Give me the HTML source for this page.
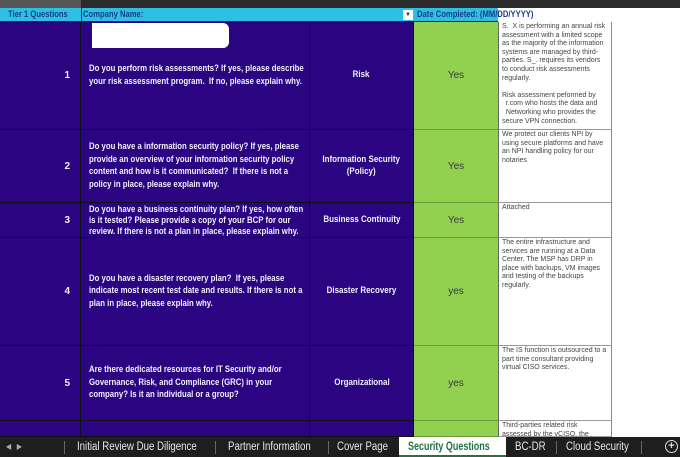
<!DOCTYPE html>
<html><head><style>
*{margin:0;padding:0;box-sizing:border-box}
body{width:680px;height:457px;overflow:hidden;background:#fff;position:relative;font-family:"Liberation Sans",sans-serif}
.a{position:absolute}
.p{background:#2a0481;border-right:1px solid #111;border-bottom:1px solid #111;color:#f0f0ff;font-weight:bold;font-size:9.5px;display:flex;align-items:center}
.g{background:#92d050;border-bottom:1px solid #6a9a3a;color:#3a3a3a;font-size:10px;display:flex;align-items:center;justify-content:center}
.e{background:#fff;border-right:1px solid #888;border-bottom:1px solid #999;border-left:1px solid #666;color:#444;font-size:7px;line-height:8.6px;padding:1px 3px;overflow:hidden}
.q{padding-left:8px;line-height:12.5px}
.q>div{width:264px;transform:scaleX(0.82);transform-origin:left center;flex:none}
.c{justify-content:center;text-align:center;line-height:12.5px}
.c>div{transform:scaleX(0.84);white-space:nowrap}
.n{justify-content:flex-end;padding-right:10px;font-size:10px}
.tab{position:absolute;top:0;height:20px;line-height:20px;font-size:11.5px;color:#e8e8e8;transform:scaleX(0.84);transform-origin:left center;white-space:nowrap}
.h{transform:scaleX(0.85);transform-origin:left center;white-space:nowrap}
</style></head><body>
<div class="a" style="left:0;top:0;width:680px;height:8px;background:#2b2b2b"></div>
<div class="a" style="left:0;top:0;width:81px;height:8px;background:#555"></div>
<div class="a" style="left:0;top:8px;width:498px;height:14px;background:#2ec0e4;border-bottom:1px solid #222"></div>
<div class="a h" style="left:8px;top:9px;font-size:9px;font-weight:bold;color:#1a3c8a">Tier 1 Questions</div>
<div class="a" style="left:81px;top:8px;width:1px;height:14px;background:#333"></div>
<div class="a h" style="left:83px;top:9px;font-size:9px;font-weight:bold;color:#1a3c8a">Company Name:</div>
<div class="a" style="left:403px;top:10px;width:10px;height:10px;background:#fff;font-size:6px;color:#333;text-align:center;line-height:10px">▼</div>
<div class="a h" style="left:417px;top:9px;font-size:9px;font-weight:bold;color:#1a3c8a">Date Completed: (MM/DD/YYYY)</div>
<!-- rows -->
<div class="a p n" style="left:0;top:22px;width:81px;height:108px">1</div>
<div class="a p q" style="left:81px;top:22px;width:229px;height:108px"><div>Do you perform risk assessments? If yes, please describe your risk assessment program.&nbsp; If no, please explain why.</div></div>
<div class="a" style="left:92px;top:23px;width:137px;height:25px;background:#fff;border-radius:0 6px 6px 0"></div>
<div class="a p c" style="left:310px;top:22px;width:104px;height:108px"><div>Risk</div></div>
<div class="a g" style="left:414px;top:22px;width:84px;height:108px">Yes</div>
<div class="a e" style="left:498px;top:22px;width:114px;height:108px">S.&nbsp; X is performing an annual risk assessment with a limited scope as the majority of the information systems are managed by third-parties. S_. requires its vendors to conduct risk assessments regularly.<br><br>Risk assessment peformed by &nbsp; &nbsp; &nbsp; &nbsp; r.com who hosts the data and &nbsp; &nbsp; &nbsp; Networking who provides the secure VPN connection.</div>

<div class="a p n" style="left:0;top:130px;width:81px;height:73px">2</div>
<div class="a p q" style="left:81px;top:130px;width:229px;height:73px"><div>Do you have a information security policy? If yes, please provide an overview of your information security policy content and how is it communicated?&nbsp; If there is not a policy in place, please explain why.</div></div>
<div class="a p c" style="left:310px;top:130px;width:104px;height:73px"><div>Information Security<br>(Policy)</div></div>
<div class="a g" style="left:414px;top:130px;width:84px;height:73px">Yes</div>
<div class="a e" style="left:498px;top:130px;width:114px;height:73px">We protect our clients NPI by using secure platforms and have an NPI handling policy for our notaries</div>

<div class="a p n" style="left:0;top:203px;width:81px;height:35px">3</div>
<div class="a p q" style="left:81px;top:203px;width:229px;height:35px;line-height:11px"><div>Do you have a business continuity plan? If yes, how often is it tested? Please provide a copy of your BCP for our review. If there is not a plan in place, please explain why.</div></div>
<div class="a p c" style="left:310px;top:203px;width:104px;height:35px"><div>Business Continuity</div></div>
<div class="a g" style="left:414px;top:203px;width:84px;height:35px">Yes</div>
<div class="a e" style="left:498px;top:203px;width:114px;height:35px">Attached</div>

<div class="a p n" style="left:0;top:238px;width:81px;height:108px">4</div>
<div class="a p q" style="left:81px;top:238px;width:229px;height:108px"><div>Do you have a disaster recovery plan?&nbsp; If yes, please indicate most recent test date and results. If there is not a plan in place, please explain why.</div></div>
<div class="a p c" style="left:310px;top:238px;width:104px;height:108px"><div>Disaster Recovery</div></div>
<div class="a g" style="left:414px;top:238px;width:84px;height:108px">yes</div>
<div class="a e" style="left:498px;top:238px;width:114px;height:108px">The entire infrastructure and services are running at a Data Center. The MSP has DRP in place with backups, VM images and testing of the backups regularly.</div>

<div class="a p n" style="left:0;top:346px;width:81px;height:75px">5</div>
<div class="a p q" style="left:81px;top:346px;width:229px;height:75px"><div>Are there dedicated resources for IT Security and/or Governance, Risk, and Compliance (GRC) in your company? Is it an individual or a group?</div></div>
<div class="a p c" style="left:310px;top:346px;width:104px;height:75px"><div>Organizational</div></div>
<div class="a g" style="left:414px;top:346px;width:84px;height:75px">yes</div>
<div class="a e" style="left:498px;top:346px;width:114px;height:75px">The IS function is outsourced to a part time consultant providing virtual CISO services.</div>

<div class="a p" style="left:0;top:421px;width:81px;height:16px"></div>
<div class="a p" style="left:81px;top:421px;width:229px;height:16px"></div>
<div class="a p" style="left:310px;top:421px;width:104px;height:16px"></div>
<div class="a g" style="left:414px;top:421px;width:84px;height:16px"></div>
<div class="a e" style="left:498px;top:421px;width:114px;height:16px">Third-parties related risk assessed by the vCISO, the process contains</div>
<!-- tabs -->
<div class="a" style="left:0;top:437px;width:680px;height:20px;background:#1e1e1e">
<div class="tab" style="left:6px;font-size:8px;color:#aaa">◀ &nbsp; ▶</div>
<div class="a" style="left:64px;top:4px;width:1px;height:13px;background:#666"></div>
<div class="tab" style="left:77px">Initial Review Due Diligence</div>
<div class="a" style="left:215px;top:4px;width:1px;height:13px;background:#666"></div>
<div class="tab" style="left:228px">Partner Information</div>
<div class="a" style="left:328px;top:4px;width:1px;height:13px;background:#666"></div>
<div class="tab" style="left:337px">Cover Page</div>
<div class="a" style="left:399px;top:0;width:107px;height:20px;background:#fff;border-bottom:2px solid #217346"></div>
<div class="tab" style="left:408px;color:#217346;font-weight:bold;transform:scaleX(0.78)">Security Questions</div>
<div class="tab" style="left:515px">BC-DR</div>
<div class="a" style="left:556px;top:4px;width:1px;height:13px;background:#666"></div>
<div class="tab" style="left:566px">Cloud Security</div>
<div class="a" style="left:641px;top:4px;width:1px;height:13px;background:#666"></div>
<div class="a" style="left:665px;top:3px;width:13px;height:13px;border:1.5px solid #ddd;border-radius:50%;color:#ddd;font-size:11px;line-height:10px;text-align:center;font-weight:bold">+</div>
</div>
</body></html>
